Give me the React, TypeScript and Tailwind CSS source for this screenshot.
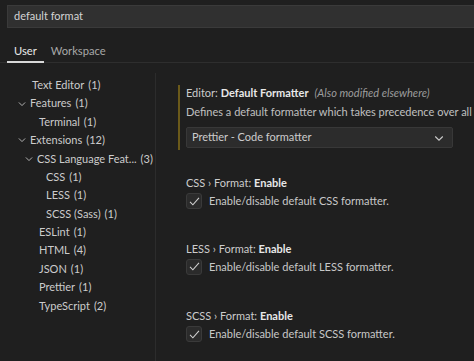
import React from "react";

const Chevron = () => (
  <svg width="10" height="10" viewBox="0 0 16 16" className="shrink-0">
    <path d="M3 5.5 L8 10.5 L13 5.5" fill="none" stroke="#c5c5c5" strokeWidth="1.4" />
  </svg>
);

type Item = { label: string; count: string; indent: number; chevron?: boolean };

const items: Item[] = [
  { label: "Text Editor", count: "(1)", indent: 32 },
  { label: "Features", count: "(1)", indent: 19, chevron: true },
  { label: "Terminal", count: "(1)", indent: 39 },
  { label: "Extensions", count: "(12)", indent: 19, chevron: true },
  { label: "CSS Language Feat...", count: "(3)", indent: 26, chevron: true },
  { label: "CSS", count: "(1)", indent: 46 },
  { label: "LESS", count: "(1)", indent: 46 },
  { label: "SCSS (Sass)", count: "(1)", indent: 46 },
  { label: "ESLint", count: "(1)", indent: 39 },
  { label: "HTML", count: "(4)", indent: 39 },
  { label: "JSON", count: "(1)", indent: 39 },
  { label: "Prettier", count: "(1)", indent: 39 },
  { label: "TypeScript", count: "(2)", indent: 39 },
];

const Check = () => (
  <div className="w-[16px] h-[16px] shrink-0 rounded-[3px] bg-[#2b2b2b] border border-[#3a3a3a] flex items-center justify-center">
    <svg width="13" height="13" viewBox="0 0 16 16">
      <path d="M2.5 8.5 L6 12 L13.5 3.5" fill="none" stroke="#d0d0d0" strokeWidth="1.3" />
    </svg>
  </div>
);

const BoolSetting = ({ cat, desc, className }: { cat: string; desc: string; className: string }) => (
  <div className={"pl-[30px] " + className}>
    <div className="h-[16px] leading-[16px] text-[#cccccc]">
      {cat} › Format: <span className="font-bold text-[#e8e8e8]">Enable</span>
    </div>
    <div className="flex items-center gap-[7px] mt-[2px]">
      <Check />
      <span className="text-[#c8c8c8]">{desc}</span>
    </div>
  </div>
);

export default function App() {
  return (
    <div
      className="w-[474px] h-[361px] overflow-hidden bg-[#1f1f1f] text-[11px] text-[#cccccc]"
      style={{ fontFamily: 'Lato, "Noto Sans", sans-serif' }}
    >
      <div className="pt-[5px] pl-[7px]">
        <div className="w-[480px] h-[23px] bg-[#303030] border border-[#3a3a3a] flex items-center pl-[6px] text-[11px] text-[#d4d4d4]">
          default format
        </div>
      </div>
      <div className="mt-[12px] flex border-b border-[#2e2e2e] pl-[7px] h-[23px] text-[11.2px]">
        <div className="px-[7px] pt-[2px] text-[#e8e8e8] border-b-[2px] border-[#d8d8d8] leading-[18px] mb-[-1px]">User</div>
        <div className="px-[7px] pt-[2px] text-[#a8a8a8] leading-[18px]">Workspace</div>
      </div>
      <div className="flex mt-[10px] h-[300px]">
        <div className="w-[156px] shrink-0 border-r border-[#2c2c2c] pt-[3px]">
          {items.map((it) => (
            <div
              key={it.label}
              className="h-[18.4px] flex items-center whitespace-nowrap text-[#cccccc]"
              style={{ paddingLeft: it.chevron ? it.indent - 2 : it.indent }}
            >
              {it.chevron && (
                <span className="mr-[3px] flex">
                  <Chevron />
                </span>
              )}
              <span>{it.label}</span>
              <span className="ml-[4px]">{it.count}</span>
            </div>
          ))}
        </div>
        <div className="flex-1 min-w-0 overflow-hidden whitespace-nowrap">
          <div className="ml-[22px] mt-[12px] border-l-[2px] border-[#6b5a1a] pl-[6px] pb-[2px]">
            <div className="h-[16px] leading-[16px]">
              Editor: <span className="font-bold text-[#e8e8e8]">Default Formatter</span>
              <span className="italic text-[#9d9d9d] ml-[6px]">(Also modified elsewhere)</span>
            </div>
            <div className="h-[16px] leading-[16px] mt-[3px] text-[#c0c0c0]">
              Defines a default formatter which takes precedence over all other formatter settings.
            </div>
            <div className="mt-[7px] w-[267px] h-[21px] bg-[#2c2c2c] border border-[#383838] rounded-[2px] flex items-center justify-between pl-[5px] pr-[7px] text-[#cccccc]">
              <span>Prettier - Code formatter</span>
              <svg width="12" height="12" viewBox="0 0 16 16">
                <path d="M3 6 L8 11 L13 6" fill="none" stroke="#cccccc" strokeWidth="1.5" />
              </svg>
            </div>
          </div>
          <BoolSetting cat="CSS" desc="Enable/disable default CSS formatter." className="mt-[25px]" />
          <BoolSetting cat="LESS" desc="Enable/disable default LESS formatter." className="mt-[31px]" />
          <BoolSetting cat="SCSS" desc="Enable/disable default SCSS formatter." className="mt-[33px]" />
        </div>
      </div>
    </div>
  );
}
